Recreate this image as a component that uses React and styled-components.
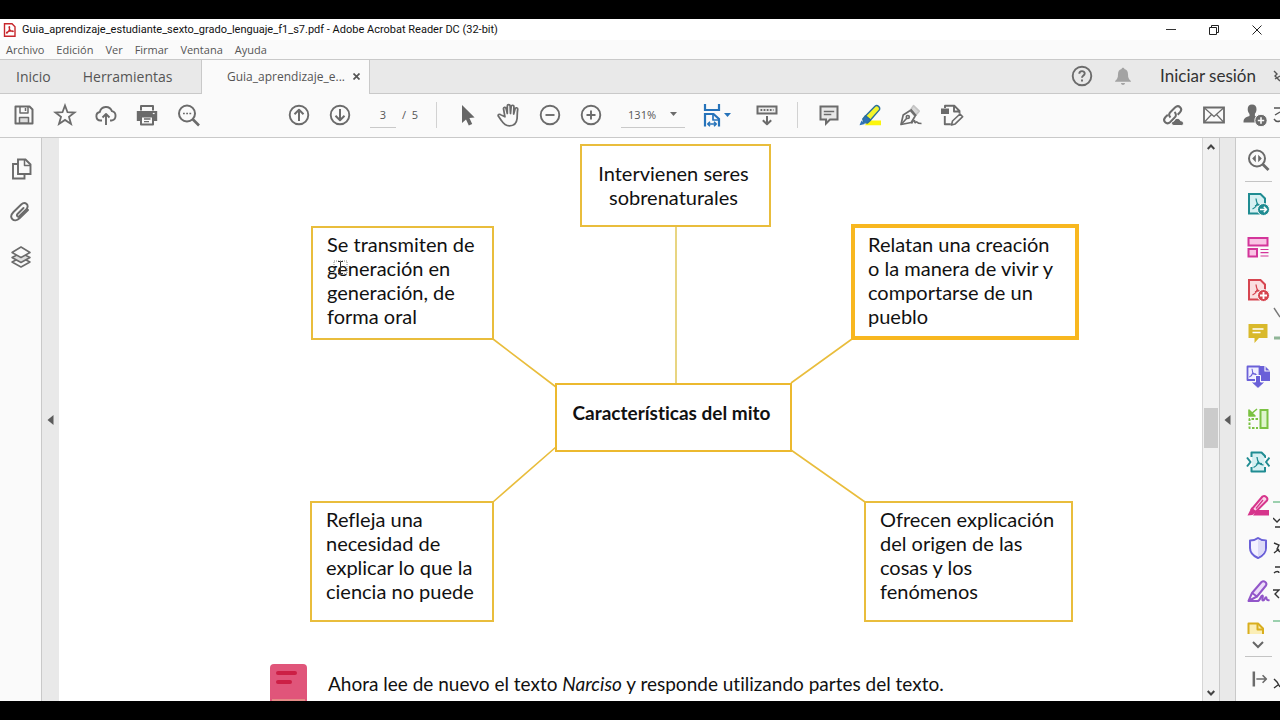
import React, { useState } from 'react';
import styled, { createGlobalStyle, css } from 'styled-components';

const INK = '#6b6b6b';
const LINE = '#c9c9c9';
const AMBER = '#e9bd3c';

const GlobalStyle = createGlobalStyle`
  * {
    box-sizing: border-box;
  }

  body {
    margin: 0;
    background: #000;
    font-family: 'Open Sans', 'Noto Sans', sans-serif;
    color: #555;
  }

  button,
  input,
  select {
    margin: 0;
    padding: 0;
    border: 0;
    background: none;
    font: inherit;
    color: inherit;
  }
`;

const Screen = styled.div`
  height: 100vh;
  padding: 19px 0;
  overflow: hidden;
`;

const Window = styled.div`
  position: relative;
  display: flex;
  flex-direction: column;
  height: 100%;
  overflow: hidden;
  background: #fafafa;
`;

const TitleBar = styled.header`
  display: flex;
  align-items: center;
  flex: none;
  height: 21px;
  padding-left: 3px;
  background: #fff;
  color: #111;
`;

const Title = styled.h1`
  flex: 1;
  margin: 0 0 0 6px;
  font-family: Roboto, sans-serif;
  font-size: 11px;
  font-weight: 400;
  line-height: 20px;
  white-space: nowrap;
`;

const WindowButtons = styled.div`
  display: flex;
  padding-right: 2px;
`;

const WindowButton = styled.button`
  display: grid;
  place-items: center;
  width: 43px;
  height: 20px;
`;

const MenuBar = styled.nav`
  display: flex;
  flex: none;
  gap: 12px;
  height: 20px;
  padding-left: 6px;
  border-bottom: 1px solid ${LINE};
`;

const MenuItem = styled.button`
  font-size: 11px;
  line-height: 18px;
`;

const TabBar = styled.div`
  display: flex;
  align-items: center;
  flex: none;
  height: 34px;
  background: #e9e9e9;
  border-bottom: 1px solid ${LINE};
`;

const TabGroup = styled.div`
  display: flex;
  gap: 32px;
  width: 201px;
  padding-left: 16px;
`;

const Tab = styled.button`
  font-size: 14px;
  line-height: 24px;
`;

const OpenTab = styled.div`
  display: flex;
  align-items: center;
  justify-content: space-between;
  width: 169px;
  height: 34px;
  padding: 0 7px 0 25px;
  background: #fafafa;
  border: solid ${LINE};
  border-width: 0 1px;
  font-size: 12px;
`;

const CloseTab = styled.button`
  display: grid;
  place-items: center;
  width: 11px;
  height: 20px;
`;

const Account = styled.div`
  display: flex;
  align-items: center;
  margin-left: auto;
  padding: 0 24px 2px 0;
`;

const SignIn = styled.button`
  margin-left: 17px;
  font-family: Lato, sans-serif;
  font-size: 17px;
  line-height: 24px;
  color: #333;
`;

const Toolbar = styled.div`
  display: flex;
  align-items: center;
  flex: none;
  height: 44px;
  padding: 0 5px 2px 3px;
  border-bottom: 1px solid ${LINE};
`;

const ToolGroup = styled.div`
  display: flex;
  align-items: center;
  margin-left: ${(p) => p.$before || 0}px;
  ${(p) =>
    p.$end &&
    css`
      margin-left: auto;
    `}
`;

const ToolButton = styled.button`
  display: grid;
  place-items: center;
  width: 41px;
  height: 36px;
`;

const Divider = styled.span`
  width: 1px;
  height: 26px;
  margin: 0 10px;
  background: #d2d2d2;
`;

const PageField = styled.label`
  display: flex;
  align-items: center;
  margin: 0 8px 0 10px;
  font-size: 11px;
  line-height: 24px;
`;

const PageInput = styled.input`
  width: 26px;
  height: 26px;
  margin-right: 6px;
  border-bottom: 1px solid ${LINE};
  text-align: center;
`;

const PageTotal = styled.span`
  white-space: pre;
`;

const ZoomField = styled.div`
  display: flex;
  align-items: center;
  width: 64px;
  margin: 0 10px;
  padding-right: 8px;
  border-bottom: 1px solid ${LINE};
  font-size: 11px;
`;

const ZoomSelect = styled.select`
  flex: 1;
  height: 25px;
  padding-left: 7px;
  appearance: none;
`;

const Body = styled.div`
  display: flex;
  flex: 1;
  min-height: 0;
`;

const Rail = styled.nav`
  display: flex;
  flex-direction: column;
  align-items: center;
  flex: none;
  width: 42px;
  padding-top: 9px;
  border-right: 1px solid ${LINE};
`;

const RailButton = styled.button`
  display: grid;
  place-items: center;
  width: 41px;
  height: 44px;
`;

const Gutter = styled.div`
  display: flex;
  align-items: center;
  justify-content: center;
  flex: none;
  width: 17px;
  background: #e9e9e9;
`;

const Handle = styled.button`
  display: grid;
  place-items: center;
  width: 15px;
  height: 30px;
`;

const Sheet = styled.main`
  flex: 1;
  min-width: 0;
  overflow: hidden;
  background: #fff;
  font-family: Lato, sans-serif;
  font-size: 20px;
  font-variant-ligatures: none;
  line-height: 24px;
  color: #111;
`;

const Diagram = styled.section`
  position: relative;
  height: 484px;
  margin-left: 251px;
`;

const Connectors = styled.svg`
  position: absolute;
  top: 0;
  left: 0;
`;

const Node = styled.div`
  position: absolute;
  left: ${(p) => p.$x}px;
  top: ${(p) => p.$y}px;
  width: ${(p) => p.$w}px;
  height: ${(p) => p.$h}px;
  padding: 4px 14px;
  border: 2px solid ${AMBER};
  white-space: pre-line;
  ${(p) =>
    p.$kind === 'strong' &&
    css`
      padding: 4px 13px;
      border: 4px solid #f8b71f;
    `}
  ${(p) =>
    p.$kind === 'centered' &&
    css`
      padding: 15px 4px 15px 0;
      text-align: center;
    `}
  ${(p) =>
    p.$kind === 'core' &&
    css`
      padding: 16px 4px 16px 0;
      border-color: #ecb92f;
      font-size: 19px;
      font-weight: 700;
      text-align: center;
    `}
`;

const TextCursor = styled.svg`
  position: absolute;
  top: 122px;
  left: 23px;
`;

const Activity = styled.section`
  display: flex;
  align-items: flex-start;
  padding: 42px 0 0 211px;
`;

const Instruction = styled.p`
  margin: 8px 0 0 21px;
  font-size: 19px;
  white-space: nowrap;
`;

const ScrollBar = styled.div`
  display: flex;
  flex-direction: column;
  align-items: center;
  flex: none;
  width: 17px;
  background: #f1f1f1;
  border-left: 1px solid #d5d5d5;
`;

const ScrollArrow = styled.button`
  display: grid;
  place-items: center;
  width: 16px;
  height: 17px;
`;

const ScrollTrack = styled.div`
  display: flex;
  flex-direction: column;
  flex: 1;
  width: 14px;

  &::before {
    content: '';
    flex: 253;
  }

  &::after {
    content: '';
    flex: 236;
  }
`;

const ScrollThumb = styled.div`
  height: 40px;
  background: #cbcbcb;
`;

const RightGutter = styled(Gutter)`
  border: solid ${LINE};
  border-width: 0 1px;
`;

const ToolsPane = styled.aside`
  display: flex;
  flex-direction: column;
  align-items: center;
  flex: none;
  width: 44px;
`;

const PaneButton = styled.button`
  display: grid;
  place-items: center;
  flex: none;
  width: 44px;
  height: 43px;
`;

const PaneRule = styled.span`
  flex: none;
  width: 27px;
  height: 1px;
  background: #c4c4c4;
`;

const CutButton = styled(PaneButton)`
  align-items: start;
  height: 22px;
  padding-top: 9px;
  overflow: hidden;
`;

const MoreButton = styled(PaneButton)`
  height: 22px;
`;

const EdgeMarks = styled.svg`
  position: absolute;
  top: 0;
  right: 0;
  pointer-events: none;
`;

const Glyph = ({ size = 24, color = INK, width = 2, children }) => (
  <svg
    width={size}
    height={size}
    viewBox="0 0 24 24"
    fill="none"
    stroke={color}
    strokeWidth={width}
    strokeLinejoin="round"
    aria-hidden="true"
  >
    {children}
  </svg>
);

const Caret = ({ color = INK }) => (
  <svg width="7" height="4" viewBox="0 0 7 4" aria-hidden="true">
    <path d="M0 0h7L3.500 4z" fill={color} />
  </svg>
);

const LeftArrow = () => (
  <svg width="7" height="10" viewBox="0 0 7 10" aria-hidden="true">
    <path d="M6.500 0v10L.5 5z" fill="#5c5c5c" />
  </svg>
);

// The Acrobat trefoil, shared by the file icons
const Trefoil = ({ color, ...rest }) => (
  <path
    d="M10 6.500c.2 3 1 5 2.200 6.300 1.200 1.100 2.800 1.700 4.300 1.500M11 11.500c-.3 2-2 4.300-4.500 5.500M9 13.800c2-.9 4-1.100 6-.7"
    stroke={color}
    strokeWidth="1.300"
    {...rest}
  />
);

const SaveIcon = () => (
  <Glyph>
    <path d="M3.500 3.500h14l3 3v14h-17z" />
    <path d="M8 4v6h8V4" strokeWidth="1.500" />
    <path d="M13.500 5v3" strokeWidth="1.500" />
    <path d="M7.500 20v-5.500h9V20z" fill="#ddd" strokeWidth="1.500" />
  </Glyph>
);

const StarIcon = () => (
  <Glyph width={1.8}>
    <path
      d="M12 2.500l2.500 6.700 7.100.3-5.600 4.400 2 7-6-4-6 4 2-7-5.600-4.400 7.100-.3z"
      strokeLinejoin="miter"
    />
  </Glyph>
);

const CloudIcon = () => (
  <Glyph width={1.9}>
    <path d="M8 17.500H6.500a4.300 4.300 0 01-.7-8.500 6.300 6.300 0 0112.100-.9 4.800 4.800 0 01-.4 9.400H16" />
    <path d="M12 22V11M8.500 14.500L12 11l3.500 3.500" />
  </Glyph>
);

const PrintIcon = () => (
  <Glyph>
    <path d="M6 7.500V3h12v4.500" />
    <path d="M1.800 8h20.400v10H19v-5H5v5H1.800z" fill={INK} stroke="none" />
    <path d="M6 13.500h12v8H6z" fill="#fafafa" />
    <path d="M9 16h6.500M9 18.700h5" strokeWidth="1.300" />
    <path d="M17.800 10.500h1.800" stroke="#fafafa" strokeWidth="1.200" />
  </Glyph>
);

const FindIcon = () => (
  <Glyph>
    <circle cx="11" cy="10.500" r="8" />
    <path d="M16.500 16l6.500 6.500" strokeWidth="2.600" />
    <path d="M7 10.500h1.800M10.200 10.500H12M13.400 10.500h1.800" strokeWidth="1.700" />
  </Glyph>
);

const RoundIcon = ({ children }) => (
  <Glyph width={1.9}>
    <circle cx="12" cy="12" r="9.300" />
    {children}
  </Glyph>
);

const PointerIcon = () => (
  <Glyph>
    <path
      d="M6 2v18l4-3.600 2.800 6.100 3.400-1.500-2.800-6 5.200-.6z"
      fill="#666"
      stroke="none"
    />
  </Glyph>
);

const HandIcon = () => (
  <Glyph width={1.500}>
    <path
      d="M8 13.500L6.800 6.300c-.2-1.600 1.800-2 2.200-.4l1 4.600V3.600c0-1.700 2.300-1.700 2.400 0l.3 6.900.6-6.400c.2-1.600 2.400-1.400 2.300.2l-.2 6.700 1.200-4.800c.4-1.500 2.400-1.100 2.200.5-.5 3.300-.3 5.500-.5 8.300-.4 4.300-3 6.700-6.500 6.700-3.600 0-5.300-2.200-6.700-4.700l-2.600-4c-.9-1.500.9-2.500 2.100-1.300z"
      transform="translate(-1.500 -1) scale(1.180 1.100)"
    />
  </Glyph>
);

const FitIcon = () => (
  <Glyph color="#2673ba" width={2.200}>
    <path d="M5 1v6h14V1" strokeLinejoin="miter" />
    <path d="M5 23.500V11h8.500l5.500 5v7.500" strokeLinejoin="miter" />
    <path d="M13 11v6h6" strokeWidth="1.700" />
    <path d="M8 21h8M10 18.700L7.700 21l2.300 2.300M14 18.700l2.300 2.300-2.300 2.300" strokeWidth="1.500" />
  </Glyph>
);

const RulerIcon = () => (
  <Glyph>
    <path d="M2.500 3.500h19v7h-19z" fill="#ededed" strokeLinejoin="miter" />
    <path d="M5.500 7h13" strokeDasharray="1.800 1.300" strokeWidth="2.200" />
    <path d="M12 13v8M7.800 17.300l4.200 4 4.200-4" strokeWidth="2" />
  </Glyph>
);

const NoteIcon = () => (
  <Glyph>
    <path d="M3.500 3.500h17v13H13L9 20.500v-4H3.500z" fill="#e8e8e8" strokeLinejoin="miter" />
    <path d="M6.800 8.500h10.400M6.800 11.500h7.500" strokeWidth="1.400" />
  </Glyph>
);

const HighlightIcon = () => (
  <Glyph color="#2b6f9b" width={1.400}>
    <path d="M10 17.500h13v4.800H7z" fill="#fcf50d" stroke="none" />
    <path d="M7.500 13L17 3.200c2.200-1.700 5.700.8 4.400 3.700L12.500 17z" fill="#f4f52c" />
    <path d="M7.500 12.800l5 4.400-3 2.800-3.700-.4-1-3.600z" fill="#2c71b8" />
    <path d="M3.500 17.500l3.500 3.500-5.500 1.300z" fill="#2c71b8" stroke="none" />
  </Glyph>
);

const SignIcon = () => (
  <Glyph width={1.700}>
    <path d="M2 21.500l2.200-9.500 7-4.500 5 5.500-4 6.500z" />
    <path d="M2.500 21L8 15" />
    <circle cx="8.800" cy="14" r="1.500" />
    <path d="M11.500 7l3-4.300 5.700 5.500-3.700 4.300z" fill="#d7d7d7" stroke="#c4c4c4" />
    <path d="M11.500 6.500l5.500 6.500" strokeWidth="2.200" />
    <path d="M12.500 20.500c2-3 3.500-4 3.300-1.500-.1 2 1.500-.8 2.100 0 .6.900 1.200 1.500 4.600 1.500" strokeWidth="1.500" />
  </Glyph>
);

const EditPageIcon = () => (
  <Glyph width={1.900}>
    <path d="M1 5.500h8v5.500H1z" fill={INK} stroke="none" />
    <path d="M5 5V2.800h9.500L19.500 8v2.500M14 3v5.500h5.500" />
    <path d="M4.800 13v8.200h6" />
    <path d="M11.500 22l1-4 7.500-7 2.700 2.700-7.500 7.200z" fill="#fafafa" strokeWidth="1.600" />
  </Glyph>
);

const LinkIcon = () => (
  <Glyph width={2}>
    <path d="M9.500 14.500c-2-2-1.500-4 0-5.500l4.500-4.500c3.700-3.500 8.300 1.200 5 4.800l-2.300 2.400" />
    <path d="M13.500 9c2 2 1.700 4 .2 5.500L9.300 19c-3.700 3.500-8.300-1.200-5-4.800l2.500-2.500" />
    <path
      d="M13 22.500c-3.200 0-3.200-4.400 0-4.400.7-3.600 5.600-3.500 6.500-.4 3.700-.2 4 4.800.8 4.800z"
      fill={INK}
      stroke="#fafafa"
      strokeWidth="1"
    />
  </Glyph>
);

const MailIcon = () => (
  <Glyph width={1.800}>
    <path d="M2 4.500h20v15H2z" strokeLinejoin="miter" />
    <path d="M2.500 5l9.500 8.500L21.500 5M2.500 19l7-7.500M21.500 19l-7-7.500" strokeWidth="1.200" />
  </Glyph>
);

const AddUserIcon = () => (
  <Glyph>
    <path
      d="M9 1.500c3 0 4.500 2 4.500 4.800 0 2-.8 3.500-1.600 4.500V13l5 2.200V19.500H.5c0-4.500 1.700-4.900 6-6.500v-2.100C5.600 9.900 4.700 8.600 4.700 6.300c0-2.800 1.400-4.800 4.300-4.800z"
      fill={INK}
      stroke="none"
    />
    <circle cx="18" cy="17.500" r="6.200" fill={INK} stroke="#fafafa" strokeWidth="1" />
    <path d="M14.800 17.500h6.400M18 14.300v6.400" stroke="#fafafa" strokeWidth="1.600" />
  </Glyph>
);

const PagesIcon = () => (
  <Glyph width={1.900}>
    <path d="M9 2.500h7.500l5 5V17H9z" strokeLinejoin="miter" />
    <path d="M15.500 3v5.500H21" strokeWidth="1.500" />
    <path d="M9 7H4v14.500h11.500v-4.300" strokeLinejoin="miter" />
  </Glyph>
);

const ClipIcon = () => (
  <Glyph width={1.900}>
    <path
      d="M15.500 7l-6 6c-1.500 1.700.5 3.500 2 2l6.700-6.500c4-4.300-1.200-8.700-5-5L5.500 11c-5.500 5.700.7 11.500 6 6.300l8.500-8.300"
      transform="translate(-1 0)"
      strokeLinecap="round"
    />
  </Glyph>
);

const LayersIcon = () => (
  <Glyph width={1.500}>
    <path d="M3 17l9-4.500 9 4.500-9 5z" fill="#fafafa" />
    <path d="M3 12.500L12 8l9 4.500-9 5z" fill="#ddd" />
    <path d="M3 7.500L12 2l9 5.500-9 5z" fill="#fafafa" />
  </Glyph>
);

const FileShape = ({ color, fill }) => (
  <>
    <path d="M3 2h11.500L19 6.500V21.500H3z" fill={fill} stroke={color} strokeLinejoin="miter" />
    <Trefoil color={color} />
  </>
);

const PANE_TOOLS = [
  {
    label: 'Exportar PDF',
    color: '#1f8c92',
    art: (
      <>
        <FileShape color="#1f8c92" fill="#d6f0f2" />
        <circle cx="17.500" cy="17.500" r="6" fill="#1f8c92" stroke="#fafafa" strokeWidth="1" />
        <path d="M14 17.500h6M17.800 14.800l2.700 2.700-2.700 2.700" stroke="#fff" strokeWidth="1.600" />
      </>
    ),
  },
  {
    label: 'Organizar páginas',
    color: '#d3359a',
    art: (
      <>
        <path d="M2.500 3h19v7.500h-19zM2.500 14h8.500v7.500H2.500z" fill="#f9c3e4" strokeLinejoin="miter" />
        <path d="M14.500 14.500h8M14.500 17.700h8M14.500 21h8" strokeWidth="1.200" />
      </>
    ),
  },
  {
    label: 'Crear PDF',
    color: '#d64550',
    art: (
      <>
        <FileShape color="#d64550" fill="#fbdfe0" />
        <circle cx="17.500" cy="17.500" r="6" fill="#d64550" stroke="#fafafa" strokeWidth="1" />
        <path d="M14 17.500h7M17.500 14v7" stroke="#fff" strokeWidth="1.800" />
      </>
    ),
  },
  {
    label: 'Comentar',
    color: '#d9b92b',
    art: (
      <>
        <path d="M2.500 3h19v14H13l-4.500 5v-5h-6z" fill="#d9b92b" stroke="none" />
        <path d="M6.500 8h11M6.500 11.500h8" stroke="#fff" strokeWidth="1.500" />
      </>
    ),
  },
  {
    label: 'Combinar archivos',
    color: '#6a60d8',
    art: (
      <>
        <path d="M13 2h6l5 5v10H13z" fill="#6a60d8" stroke="none" />
        <path d="M19 1.500V7h5" stroke="#fafafa" strokeWidth="1.200" />
        <path d="M1.500 2.500h12V16h-12z" fill="#f0efff" strokeWidth="1.800" />
        <Trefoil color="#6a60d8" transform="translate(-2 -.5) scale(.8)" />
        <path d="M9.500 11.500h5V18H19l-7 6.500L5 18h4.500z" fill="#6a60d8" stroke="#fafafa" strokeWidth="1" />
      </>
    ),
  },
  {
    label: 'Editar tamaño',
    color: '#7bc243',
    art: (
      <>
        <path d="M14.500 3h7v18h-7z" fill="#dff5cd" strokeLinejoin="miter" />
        <path d="M12 12H3.500v9H12" strokeDasharray="2.500 1.500" />
        <path d="M3 3v6h6zM5 7l6-5" fill="#7bc243" strokeWidth="1.600" />
      </>
    ),
  },
  {
    label: 'Comprimir PDF',
    color: '#1f8c92',
    art: (
      <>
        <path d="M5.500 7V2.500h10L19 6v2M5.500 17v4.500H19V17" fill="#d6f0f2" />
        <path d="M6 7h12.500v10H6z" fill="#d6f0f2" stroke="none" />
        <Trefoil color="#1f8c92" transform="translate(1 .5)" />
        <path d="M1 7.500L4.500 12 1 16.500M23.500 7.500L20 12l3.500 4.500" />
      </>
    ),
  },
  {
    label: 'Censurar',
    color: '#d6358c',
    art: (
      <>
        <path d="M10.500 17h12.500v5.500H7z" fill="#d6358c" stroke="none" />
        <path d="M5.500 16.500L16.500 3.500c2.500-1.500 6 1.300 4.500 4L9.500 19z" fill="#fbd3e8" />
        <path d="M5.500 14.500l5 4-4 3.500-5 .5z" fill="#d6358c" stroke="none" />
        <path d="M10 15.500l7-8.500" strokeWidth="1.300" />
      </>
    ),
  },
  {
    label: 'Proteger',
    color: '#6a60d8',
    art: (
      <>
        <path d="M12 2c2.500 2 5 2.500 8 2.500V12c0 5-3.500 8-8 10-4.500-2-8-5-8-10V4.500C7 4.500 9.500 4 12 2z" fill="#f3f1ff" />
        <path d="M12 3.500c2 1.500 4 2 7 2V12c0 4-3 7-7 9z" fill="#dcdaf7" stroke="none" />
      </>
    ),
  },
  {
    label: 'Rellenar y firmar',
    color: '#9256c9',
    art: (
      <>
        <path d="M6 14L15.500 3c2.500-2 6 .8 4.500 3.500L11 17.500z" fill="#ecdcf9" />
        <path d="M6 14l-3.500 8 8.500-4.500M2 22h9.500c3 0 3-6 5-5.500 1.500.4-1.500 5 .5 5s1.700-3.500 3-3.200c1.200.3-.5 3.700 3.500 2.700" />
      </>
    ),
  },
];

const NODES = [
  { x: 270, y: 6, w: 191, h: 83, kind: 'centered', text: 'Intervienen seres\nsobrenaturales' },
  { x: 1, y: 88, w: 183, h: 114, text: 'Se transmiten de\ngeneración en\ngeneración, de\nforma oral' },
  {
    x: 541,
    y: 86,
    w: 228,
    h: 116,
    kind: 'strong',
    text: 'Relatan una creación\no la manera de vivir y\ncomportarse de un\npueblo',
  },
  { x: 245, y: 245, w: 237, h: 69, kind: 'core', text: 'Características del mito' },
  { x: 0, y: 363, w: 184, h: 121, text: 'Refleja una\nnecesidad de\nexplicar lo que la\nciencia no puede' },
  { x: 554, y: 363, w: 209, h: 121, text: 'Ofrecen explicación\ndel origen de las\ncosas y los\nfenómenos' },
];

const MENUS = ['Archivo', 'Edición', 'Ver', 'Firmar', 'Ventana', 'Ayuda'];

const ConceptMap = () => (
  <Diagram>
    <Connectors width="770" height="484" fill="none" stroke={AMBER} strokeWidth="1.600" aria-hidden="true">
      <path d="M366 88v158" stroke="#e3cb62" />
      <path d="M183 201l63 48M481 245l61-44M246 309l-63 55M481 312l74 52" />
    </Connectors>
    {NODES.map((n) => (
      <Node key={n.text} $x={n.x} $y={n.y} $w={n.w} $h={n.h} $kind={n.kind}>
        {n.text}
      </Node>
    ))}
    <TextCursor width="15" height="15" viewBox="0 0 15 15" fill="none" aria-hidden="true">
      <path d="M1 1h13v13H1z" stroke="#888" strokeDasharray="1 1" />
      <path d="M5 1.500h2l.5.500.5-.5h2M7.500 2v11M5 13.500h5" stroke="#333" />
    </TextCursor>
  </Diagram>
);

const App = () => {
  const [page, setPage] = useState('3');
  const [zoom, setZoom] = useState('131%');

  return (
    <Screen>
      <GlobalStyle />
      <Window>
        <TitleBar>
          <svg width="13" height="14" viewBox="0 0 13 14" fill="none" stroke="#c8272c" aria-hidden="true">
            <path d="M1.500.7h7.500l3 3v9.600H1.500z" fill="#fff" strokeWidth="1.400" />
            <path
              d="M6.300 3.500c-.8.200.2 3.300 1.500 4.400 1 .8 2.700.8 2.500.2-.3-1-6.800.4-6.800 1.700 0 1.200 2.200-.9 2.800-3.100.4-1.400.5-3.300 0-3.200z"
              strokeWidth="1.200"
            />
          </svg>
          <Title>Guia_aprendizaje_estudiante_sexto_grado_lenguaje_f1_s7.pdf - Adobe Acrobat Reader DC (32-bit)</Title>
          <WindowButtons>
            <WindowButton aria-label="Minimizar">
              <svg width="10" height="10" stroke="#333">
                <path d="M0 4.500h10" />
              </svg>
            </WindowButton>
            <WindowButton aria-label="Restaurar">
              <svg width="10" height="10" fill="none" stroke="#222">
                <path d="M.5 2.500h7v7h-7zM2.500 2V.5h7v7H8" />
              </svg>
            </WindowButton>
            <WindowButton aria-label="Cerrar">
              <svg width="10" height="10" stroke="#222">
                <path d="M.5.5l9 9M9.500.5l-9 9" />
              </svg>
            </WindowButton>
          </WindowButtons>
        </TitleBar>

        <MenuBar>
          {MENUS.map((m) => (
            <MenuItem key={m}>{m}</MenuItem>
          ))}
        </MenuBar>

        <TabBar>
          <TabGroup>
            <Tab>Inicio</Tab>
            <Tab>Herramientas</Tab>
          </TabGroup>
          <OpenTab>
            <span>Guia_aprendizaje_e...</span>
            <CloseTab aria-label="Cerrar pestaña">
              <svg width="7" height="7" stroke="#555" strokeWidth="1.700">
                <path d="M.5.5l6 6M6.500.5l-6 6" />
              </svg>
            </CloseTab>
          </OpenTab>
          <Account>
            <ToolButton aria-label="Ayuda">
              <RoundIcon>
                <path d="M9.300 9.700c0-3.500 5.400-3.300 5.400-.3 0 2-2.700 2-2.700 4.300M12 15.500v2" />
              </RoundIcon>
            </ToolButton>
            <ToolButton aria-label="Notificaciones">
              <Glyph size={20}>
                <path
                  d="M12 2c1 0 1.700.7 1.700 1.600 3 .8 4.300 3 4.300 6.400 0 4.500 1 6 3.500 8v1h-19v-1C5 16 6 14.500 6 10c0-3.400 1.300-5.600 4.300-6.400C10.300 2.700 11 2 12 2zM9.500 20.500h5c-.5 3-4.500 3-5 0z"
                  fill="#a3a3a3"
                  stroke="none"
                />
              </Glyph>
            </ToolButton>
            <SignIn>Iniciar sesión</SignIn>
          </Account>
        </TabBar>

        <Toolbar>
          <ToolGroup>
            <ToolButton aria-label="Guardar"><SaveIcon /></ToolButton>
            <ToolButton aria-label="Favorito"><StarIcon /></ToolButton>
            <ToolButton aria-label="Subir a la nube"><CloudIcon /></ToolButton>
            <ToolButton aria-label="Imprimir"><PrintIcon /></ToolButton>
            <ToolButton aria-label="Buscar"><FindIcon /></ToolButton>
          </ToolGroup>
          <ToolGroup $before={70}>
            <ToolButton aria-label="Página anterior">
              <RoundIcon><path d="M12 18V7M7.500 11.300L12 6.800l4.500 4.500" strokeWidth="2" /></RoundIcon>
            </ToolButton>
            <ToolButton aria-label="Página siguiente">
              <RoundIcon><path d="M12 6v11M7.500 12.700l4.500 4.500 4.500-4.500" strokeWidth="2" /></RoundIcon>
            </ToolButton>
            <PageField>
              <PageInput aria-label="Página" value={page} onChange={(e) => setPage(e.target.value)} />
              <PageTotal>{'/  5'}</PageTotal>
            </PageField>
          </ToolGroup>
          <Divider />
          <ToolGroup>
            <ToolButton aria-label="Seleccionar"><PointerIcon /></ToolButton>
            <ToolButton aria-label="Mano"><HandIcon /></ToolButton>
            <ToolButton aria-label="Reducir">
              <RoundIcon><path d="M7.500 12h9" /></RoundIcon>
            </ToolButton>
            <ToolButton aria-label="Ampliar">
              <RoundIcon><path d="M7.500 12h9M12 7.500v9" /></RoundIcon>
            </ToolButton>
            <ZoomField>
              <ZoomSelect aria-label="Zoom" value={zoom} onChange={(e) => setZoom(e.target.value)}>
                <option>131%</option>
              </ZoomSelect>
              <Caret />
            </ZoomField>
            <ToolButton aria-label="Ajustar al ancho">
              <ToolGroup>
                <FitIcon />
                <Caret color="#2673ba" />
              </ToolGroup>
            </ToolButton>
          </ToolGroup>
          <ToolGroup $before={10}>
            <ToolButton aria-label="Barra de herramientas"><RulerIcon /></ToolButton>
          </ToolGroup>
          <Divider />
          <ToolGroup>
            <ToolButton aria-label="Nota"><NoteIcon /></ToolButton>
            <ToolButton aria-label="Resaltar"><HighlightIcon /></ToolButton>
            <ToolButton aria-label="Firmar"><SignIcon /></ToolButton>
            <ToolButton aria-label="Editar página"><EditPageIcon /></ToolButton>
          </ToolGroup>
          <ToolGroup $end>
            <ToolButton aria-label="Compartir vínculo"><LinkIcon /></ToolButton>
            <ToolButton aria-label="Enviar por correo"><MailIcon /></ToolButton>
            <ToolButton aria-label="Añadir personas"><AddUserIcon /></ToolButton>
          </ToolGroup>
        </Toolbar>

        <Body>
          <Rail>
            <RailButton aria-label="Miniaturas"><PagesIcon /></RailButton>
            <RailButton aria-label="Adjuntos"><ClipIcon /></RailButton>
            <RailButton aria-label="Capas"><LayersIcon /></RailButton>
          </Rail>
          <Gutter>
            <Handle aria-label="Panel izquierdo"><LeftArrow /></Handle>
          </Gutter>

          <Sheet>
            <ConceptMap />
            <Activity>
              <svg width="37" height="48" viewBox="0 0 37 48" aria-hidden="true">
                <rect width="37" height="48" rx="4" fill="#e0557a" />
                <path d="M8 9h17M8 18h12" stroke="#cc1f45" strokeWidth="4" strokeLinecap="round" />
                <path d="M2 36h33" stroke="#e58a86" strokeWidth="2" />
              </svg>
              <Instruction>
                Ahora lee de nuevo el texto <em>Narciso</em> y responde utilizando partes del texto.
              </Instruction>
            </Activity>
          </Sheet>

          <ScrollBar>
            <ScrollArrow aria-label="Desplazar arriba">
              <svg width="8" height="6" fill="none" stroke="#444" strokeWidth="2">
                <path d="M.7 5L4 1.500 7.300 5" />
              </svg>
            </ScrollArrow>
            <ScrollTrack>
              <ScrollThumb />
            </ScrollTrack>
            <ScrollArrow aria-label="Desplazar abajo">
              <svg width="8" height="6" fill="none" stroke="#444" strokeWidth="2">
                <path d="M.7 1L4 4.500 7.300 1" />
              </svg>
            </ScrollArrow>
          </ScrollBar>
          <RightGutter>
            <Handle aria-label="Panel derecho"><LeftArrow /></Handle>
          </RightGutter>

          <ToolsPane>
            <PaneButton aria-label="Buscar herramientas">
              <Glyph>
                <circle cx="11" cy="10.500" r="8" />
                <path d="M16.500 16l6 6" strokeWidth="2.800" />
                <path d="M9.800 6.800v7.400L6.200 10.500zM12.200 6.800v7.400l3.600-3.700z" fill={INK} stroke="none" />
              </Glyph>
            </PaneButton>
            <PaneRule />
            {PANE_TOOLS.map((t) => (
              <PaneButton key={t.label} aria-label={t.label}>
                <Glyph color={t.color}>{t.art}</Glyph>
              </PaneButton>
            ))}
            <CutButton aria-label="Más archivos">
              <Glyph color="#d9ae1e">
                <path d="M2.500 22V2.500H12L17 7.500V22z" fill="#fbeeb5" />
                <path d="M11.500 3v5.500H17" />
              </Glyph>
            </CutButton>
            <MoreButton aria-label="Más herramientas">
              <svg width="12" height="8" fill="none" stroke="#666" strokeWidth="2">
                <path d="M1 1l5 5 5-5" />
              </svg>
            </MoreButton>
            <PaneRule />
            <PaneButton aria-label="Contraer panel">
              <Glyph size={20}>
                <path d="M7 3v18" strokeWidth="3" />
                <path d="M10 12h12M17.500 7.500L22 12l-4.500 4.500" strokeWidth="2" />
              </Glyph>
            </PaneButton>
          </ToolsPane>
        </Body>

        {/* slivers of the window underneath, showing along the right edge */}
        <EdgeMarks width="7" height="682" viewBox="0 0 7 682" fill="none" stroke="#333" strokeWidth="1.400" aria-hidden="true">
          <path d="M1 52l3 3-2 2 5 5M2 60l5-3M1 89h6M2 96l5-3M1 100c2 3 4 3 6 2" stroke="#555" />
          <path d="M1 289l6 9" stroke="#777" />
          <path d="M1 319h6" stroke="#8fb597" strokeWidth="3" />
          <path d="M0 483h7M0 602h7" stroke="#9bd0ae" strokeWidth="2" />
          <path d="M0 499l4 4 3-3M2 508h5M1 524l5 2-2 4 3 3M1 534l5-4M2 548h5M1 554c2-2 5-2 5 0M0 571h6l-4 4 4 4M1 660l3 3 3 5M1 669l4-3" />
        </EdgeMarks>
      </Window>
    </Screen>
  );
};

export default App;
